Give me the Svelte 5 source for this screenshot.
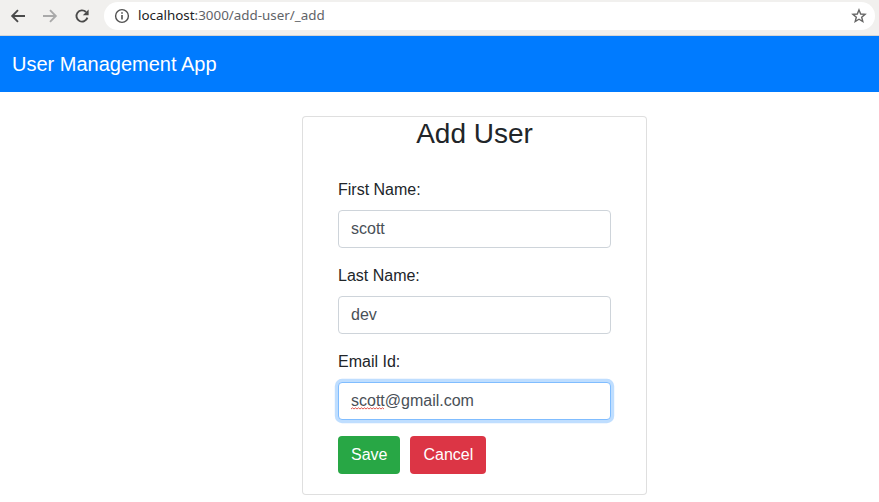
<script lang="ts">
	let firstName = $state('scott');
	let lastName = $state('dev');
	let emailId = $state('scott@gmail.com');
</script>

<div class="browser-bar">
	<div class="nav-icons">
		<svg class="icon" viewBox="0 0 16 16" aria-label="Back">
			<path d="M15 8H2.500M8 2.200 2.200 8 8 13.800" fill="none" stroke="#4a4a4a" stroke-width="1.9" />
		</svg>
		<svg class="icon" viewBox="0 0 16 16" aria-label="Forward">
			<path d="M1 8h12.500M8 2.200 13.800 8 8 13.800" fill="none" stroke="#a9a9a9" stroke-width="1.9" />
		</svg>
		<svg class="icon" viewBox="0 0 16 16" aria-label="Reload">
			<path d="M13.400 9.600A5.600 5.600 0 1 1 12 4" fill="none" stroke="#4a4a4a" stroke-width="1.9" />
			<path d="M14.600 1.400v5.800H8.800z" fill="#4a4a4a" />
		</svg>
	</div>
	<div class="address">
		<svg class="info" viewBox="0 0 16 16" aria-label="Site information">
			<circle cx="8" cy="8" r="6.400" fill="none" stroke="#505050" stroke-width="1.400" />
			<path d="M7.200 7h1.600v4.600H7.200zM7.200 4.200h1.600v1.600H7.200z" fill="#505050" />
		</svg>
		<span class="url"><span class="host">localhost</span>:3000/add-user/_add</span>
		<svg class="star" viewBox="0 0 16 16" aria-label="Bookmark">
			<path d="M8 1.900 9.700 6l4.400.3-3.400 2.900 1.100 4.300L8 11.200l-3.800 2.300 1.100-4.300-3.400-2.900L6.300 6z" fill="none" stroke="#666" stroke-width="1.400" />
		</svg>
	</div>
</div>

<nav class="navbar">User Management App</nav>

<main class="page">
	<section class="card">
		<h3>Add User</h3>
		<form class="card-body">
			<div class="form-group">
				<label for="first-name">First Name:</label>
				<input id="first-name" spellcheck="false" bind:value={firstName} />
			</div>
			<div class="form-group">
				<label for="last-name">Last Name:</label>
				<input id="last-name" spellcheck="false" bind:value={lastName} />
			</div>
			<div class="form-group">
				<label for="email-id">Email Id:</label>
				<div class="input-wrap">
					<input id="email-id" class="focused" spellcheck="false" bind:value={emailId} />
					<svg class="squiggle" viewBox="0 0 34 3" aria-hidden="true">
						<path d="M0 2 1.500 .8 3 2 4.500 .8 6 2 7.500 .8 9 2 10.500 .8 12 2 13.500 .8 15 2 16.500 .8 18 2 19.500 .8 21 2 22.500 .8 24 2 25.500 .8 27 2 28.500 .8 30 2 31.500 .8 33 2" fill="none" stroke="#e0483e" stroke-width="0.9" />
					</svg>
				</div>
			</div>
			<div class="actions">
				<button type="button" class="btn save">Save</button>
				<button type="button" class="btn cancel">Cancel</button>
			</div>
		</form>
	</section>
</main>

<style>
	:global(body) {
		background: #fff;
		color: #212529;
		font-family: "Liberation Sans", Arial, sans-serif;
		font-size: 16px;
		line-height: 1.5;
	}

	.browser-bar {
		display: flex;
		align-items: center;
		height: 35px;
		padding-right: 4px;
		background: #f1f0ee;
		border-bottom: 1px solid #d6d6d6;
	}

	.nav-icons {
		display: flex;
		align-items: center;
		gap: 16px;
		padding: 0 14px 4px 10px;
	}

	.icon {
		width: 16px;
		height: 16px;
	}

	.address {
		display: flex;
		flex: 1;
		align-items: center;
		height: 28px;
		margin-bottom: 4px;
		padding: 0 8px 0 10px;
		background: #fff;
		border-radius: 14px;
	}

	.info {
		width: 16px;
		height: 16px;
	}

	.url {
		flex: 1;
		margin-left: 8px;
		color: #5f6368;
		font-family: "Noto Sans", "Open Sans", sans-serif;
		font-size: 13.4px;
	}

	.host {
		color: #202124;
	}

	.star {
		width: 16px;
		height: 16px;
	}

	.navbar {
		height: 56px;
		padding: 0 12px;
		background: #007bff;
		color: #fff;
		font-size: 20px;
		line-height: 56px;
	}

	.page {
		display: flex;
		padding: 24px 0 0 302px;
	}

	.card {
		box-sizing: border-box;
		width: 345px;
		border: 1px solid rgba(0, 0, 0, 0.125);
		border-radius: 4px;
		background: #fff;
	}

	h3 {
		margin: 0 0 7px;
		font-size: 28px;
		font-weight: 500;
		line-height: 1.2;
		text-align: center;
	}

	.card-body {
		padding: 20px 35px;
	}

	.form-group {
		margin-bottom: 16px;
	}

	label {
		display: inline-block;
		margin-bottom: 8px;
	}

	.input-wrap {
		position: relative;
	}

	input {
		display: block;
		box-sizing: border-box;
		width: 100%;
		height: 38px;
		padding: 6px 12px;
		background: #fff;
		border: 1px solid #ced4da;
		border-radius: 4px;
		color: #495057;
		font: inherit;
		outline: none;
	}

	input.focused,
	input:focus {
		border-color: #80bdff;
		box-shadow: 0 0 0 3.2px rgba(0, 123, 255, 0.25);
	}

	.squiggle {
		position: absolute;
		left: 13px;
		top: 25px;
		width: 34px;
		height: 3px;
	}

	.actions {
		display: flex;
		gap: 10px;
	}

	.btn {
		height: 38px;
		padding: 6px 12px;
		border: 1px solid transparent;
		border-radius: 4px;
		color: #fff;
		font: inherit;
	}

	.save {
		background: #28a745;
	}

	.cancel {
		background: #dc3545;
	}
</style>
